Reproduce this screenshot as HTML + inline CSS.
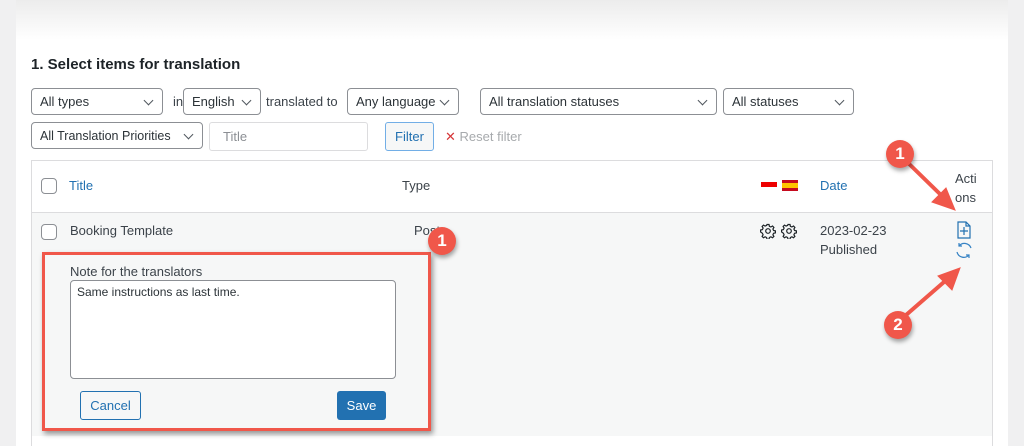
<!DOCTYPE html>
<html><head><meta charset="utf-8"><style>
*{box-sizing:border-box;margin:0;padding:0}
html,body{width:1024px;height:446px;overflow:hidden}
body{background:#f0f0f1;font-family:"Liberation Sans",sans-serif;font-size:13px;color:#3c434a;position:relative}
.a{position:absolute}
.panel{left:16px;top:0;width:992px;height:446px;background:#fff}
.sel{position:absolute;height:27px;border:1px solid #8c8f94;border-radius:4px;background:#fff;padding:0 0 0 8px;line-height:25px;font-size:13px;color:#2c3338;white-space:nowrap}
.sel:after{content:"";position:absolute;right:10px;top:8px;width:6px;height:6px;border-right:1.5px solid #50575e;border-bottom:1.5px solid #50575e;transform:rotate(45deg)}
.t{position:absolute;font-size:13px;white-space:nowrap}
.cb{position:absolute;width:16px;height:16px;border:1px solid #8c8f94;border-radius:4px;background:#fff}
.badge{position:absolute;width:28px;height:28px;border-radius:50%;background:#f0574a;color:#fff;font-weight:bold;font-size:17px;text-align:center;line-height:28px;box-shadow:1px 3px 4px rgba(0,0,0,.35)}
</style></head><body>
<div class="a panel"></div>
<div class="a" style="left:16px;top:0;width:992px;height:40px;background:linear-gradient(#ececec,#fff)"></div>
<div class="t" style="left:31px;top:56px;font-size:15px;font-weight:bold;color:#1d2327">1. Select items for translation</div>
<div class="sel" style="left:31px;top:88px;width:132px">All types</div>
<div class="t" style="left:173px;top:94px">in</div>
<div class="sel" style="left:183px;top:88px;width:78px">English</div>
<div class="t" style="left:266px;top:94px">translated to</div>
<div class="sel" style="left:347px;top:88px;width:112px">Any language</div>
<div class="sel" style="left:480px;top:88px;width:237px">All translation statuses</div>
<div class="sel" style="left:723px;top:88px;width:131px">All statuses</div>
<div class="sel" style="left:31px;top:122px;width:172px;font-size:12.5px;line-height:27px">All Translation Priorities</div>
<div class="a" style="left:209px;top:122px;width:159px;height:29px;border:1px solid #dcdcde;border-radius:3px"></div>
<div class="t" style="left:223px;top:129px;color:#8c8f94">Title</div>
<div class="a" style="left:385px;top:122px;width:49px;height:29px;border:1px solid #72aee6;border-radius:3px;background:#f6f7f7;color:#2271b1;text-align:center;line-height:27px;font-size:13px">Filter</div>
<div class="t" style="left:445px;top:129px;color:#a7aaad"><span style="color:#d63638">✕</span> Reset filter</div>
<div class="a" style="left:31px;top:160px;width:962px;height:286px;border:1px solid #dcdcde;border-bottom:none;background:#fff"></div>
<div class="a" style="left:32px;top:212px;width:960px;height:224px;background:#f6f7f7;border-top:1px solid #dcdcde"></div>
<div class="cb" style="left:41px;top:178px"></div>
<div class="t" style="left:69px;top:178px;color:#2271b1">Title</div>
<div class="t" style="left:402px;top:178px">Type</div>
<div class="a" style="left:761px;top:182px;width:16px;height:4px;background:#fff;border-bottom:5px solid #e00"></div>
<div class="a" style="left:782px;top:180px;width:16px;height:11px;background:linear-gradient(#c60b1e 25%,#ffc400 25%,#ffc400 75%,#c60b1e 75%)"></div>
<div class="t" style="left:820px;top:178px;color:#2271b1">Date</div>
<div class="t" style="left:955px;top:169px;line-height:19px">Acti<br>ons</div>
<div class="cb" style="left:41px;top:224px"></div>
<div class="t" style="left:70px;top:223px">Booking Template</div>
<div class="t" style="left:414px;top:223px">Post</div>
<svg class="a" style="left:760px;top:223px" width="40" height="16" viewBox="0 0 40 16" fill="none" stroke="#1d2327" stroke-width="1.2"><g id="g"><circle cx="8" cy="8" r="2.3"/><path d="M7 1.5h2l.4 1.8 1.5.7 1.6-1 1.4 1.4-1 1.6.7 1.5 1.8.4v2l-1.8.4-.7 1.5 1 1.6-1.4 1.4-1.6-1-1.5.7-.4 1.8H7l-.4-1.8-1.5-.7-1.6 1-1.4-1.4 1-1.6-.7-1.5L.6 9V7l1.8-.4.7-1.5-1-1.6 1.4-1.4 1.6 1 1.5-.7z"/></g><use href="#g" x="21"/></svg>
<div class="t" style="left:820px;top:221px;line-height:19px">2023-02-23<br>Published</div>
<svg class="a" style="left:954px;top:220px" width="20" height="42" viewBox="0 0 20 42" fill="none" stroke="#2271b1" stroke-width="1.2"><path d="M4 2h8l4 4v12H4z M12 2v4h4 M10 7v8 M6 11h8"/><path d="M17 28a7 7 0 0 0-12-2 M3 32a7 7 0 0 0 12 3 M5 23v3h3 M15 38v-3h-3" stroke="#3582c4"/></svg>
<div class="a" style="left:42px;top:252px;width:389px;height:179px;border:3px solid #f0574a;box-shadow:2px 3px 5px rgba(0,0,0,.4)"></div>
<div class="t" style="left:70px;top:264px">Note for the translators</div>
<div class="a" style="left:70px;top:280px;width:326px;height:99px;border:1px solid #8c8f94;border-radius:4px;background:#fff;padding:4px 6px;font-size:12px;color:#2c3338">Same instructions as last time.</div>
<div class="a" style="left:80px;top:391px;width:61px;height:29px;border:1px solid #2271b1;border-radius:3px;background:#f6f7f7;color:#2271b1;text-align:center;line-height:27px">Cancel</div>
<div class="a" style="left:337px;top:391px;width:49px;height:29px;border-radius:3px;background:#2271b1;color:#fff;text-align:center;line-height:29px">Save</div>
<svg class="a" style="left:0;top:0" width="1024" height="446"><g stroke="#f0574a" stroke-width="4" stroke-linecap="round" fill="#f0574a"><line x1="902" y1="157" x2="942" y2="196"/><polygon points="955,210 932,202 946,188" stroke-width="1"/><line x1="898" y1="322" x2="944" y2="282"/><polygon points="960,268 952,290 938,276" stroke-width="1"/></g></svg>
<div class="badge" style="left:428px;top:227px">1</div>
<div class="badge" style="left:886px;top:140px">1</div>
<div class="badge" style="left:884px;top:311px">2</div>
</body></html>
